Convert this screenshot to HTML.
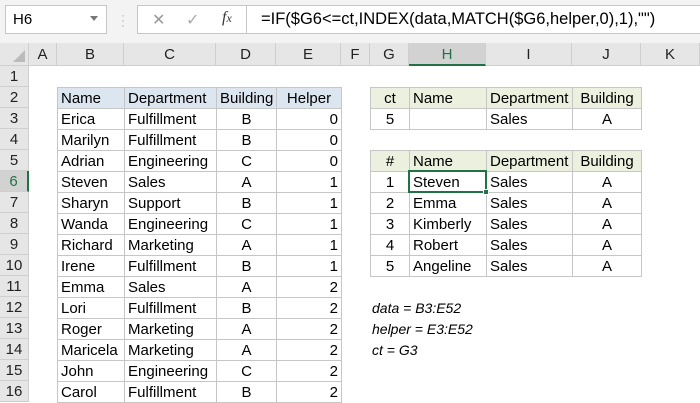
<!DOCTYPE html>
<html><head><meta charset="utf-8"><style>
*{margin:0;padding:0;box-sizing:border-box}
body{width:700px;height:400px;overflow:hidden;background:#fff;font-family:"Liberation Sans",sans-serif;font-size:15px;color:#000;position:relative}
.abs{position:absolute}
.top{left:0;top:0;width:700px;height:43px;background:#f3f3f3}
.nb{left:5px;top:5px;width:102px;height:29px;background:#fff;border:1px solid #c6c6c6;padding:5px 0 0 7px;font-size:15px}
.fb{left:137px;top:5px;width:110px;height:29px;background:#fff;border:1px solid #c6c6c6}
.fx{left:246px;top:5px;width:460px;height:29px;background:#fff;border:1px solid #c6c6c6;padding:4px 0 0 14px;font-size:16.5px;white-space:nowrap}
.ch{top:43px;height:23px;background:#e6e6e6;border-right:1px solid #cfcfcf;border-bottom:1px solid #cfcfcf;text-align:center;font-size:15px;line-height:23px;color:#222}
.rh{left:0;width:29px;height:21px;background:#e6e6e6;border-bottom:1px solid #cfcfcf;border-right:1px solid #cfcfcf;text-align:center;line-height:21px;color:#222;font-size:15px}
table{position:absolute;border-collapse:collapse;table-layout:fixed}
td{border:1px solid #c6c6c6;height:21px;padding:0 3px;white-space:nowrap;overflow:hidden;line-height:19px;font-size:15px}
.c{text-align:center}.r{text-align:right}
.hb td{background:#dce6f1}
.hg td{background:#ebf1de}
.it{font-style:italic;left:372px;font-size:14px}
</style></head><body>
<div class="abs top"></div>
<div class="abs nb">H6<span style="position:absolute;right:8px;top:10px;width:0;height:0;border-left:4px solid transparent;border-right:4px solid transparent;border-top:5px solid #777"></span></div>
<div class="abs" style="left:121px;top:13px;color:#aaa;font-size:12px;line-height:5px">·<br>·<br>·</div>
<div class="abs fb"><span class="abs" style="left:14px;top:4px;color:#999;font-size:16px">✕</span><span class="abs" style="left:48px;top:4px;color:#aaa;font-size:16px">✓</span><span class="abs" style="left:84px;top:3px;color:#333;font-family:'Liberation Serif',serif;font-style:italic;font-size:16px">f<span style="font-size:12px">x</span></span></div>
<div class="abs fx">=IF($G6&lt;=ct,INDEX(data,MATCH($G6,helper,0),1),"")</div>
<div class="abs ch" style="left:0;width:29px"><span class="abs" style="right:3px;bottom:3px;width:0;height:0;border-left:12px solid transparent;border-bottom:12px solid #bbb"></span></div>
<div class="abs ch" style="left:29px;width:28px">A</div>
<div class="abs ch" style="left:57px;width:67px">B</div>
<div class="abs ch" style="left:124px;width:92px">C</div>
<div class="abs ch" style="left:216px;width:60px">D</div>
<div class="abs ch" style="left:276px;width:65px">E</div>
<div class="abs ch" style="left:341px;width:29px">F</div>
<div class="abs ch" style="left:370px;width:39px">G</div>
<div class="abs ch" style="left:409px;width:77px;background:#d2d2d2;border-bottom:2px solid #217346;color:#217346">H</div>
<div class="abs ch" style="left:486px;width:86px">I</div>
<div class="abs ch" style="left:572px;width:69px">J</div>
<div class="abs ch" style="left:641px;width:59px">K</div>
<div class="abs rh" style="top:66px">1</div>
<div class="abs rh" style="top:87px">2</div>
<div class="abs rh" style="top:108px">3</div>
<div class="abs rh" style="top:129px">4</div>
<div class="abs rh" style="top:150px">5</div>
<div class="abs rh" style="top:171px;background:#d2d2d2;border-right:2px solid #217346;color:#217346">6</div>
<div class="abs rh" style="top:192px">7</div>
<div class="abs rh" style="top:213px">8</div>
<div class="abs rh" style="top:234px">9</div>
<div class="abs rh" style="top:255px">10</div>
<div class="abs rh" style="top:276px">11</div>
<div class="abs rh" style="top:297px">12</div>
<div class="abs rh" style="top:318px">13</div>
<div class="abs rh" style="top:339px">14</div>
<div class="abs rh" style="top:360px">15</div>
<div class="abs rh" style="top:381px">16</div>

<table style="left:57px;top:87px;width:285px">
<colgroup><col style="width:67px"><col style="width:92px"><col style="width:60px"><col style="width:65px"></colgroup>
<tr class="hb"><td>Name</td><td>Department</td><td class="c">Building</td><td class="c">Helper</td></tr>
<tr><td>Erica</td><td>Fulfillment</td><td class="c">B</td><td class="r">0</td></tr>
<tr><td>Marilyn</td><td>Fulfillment</td><td class="c">B</td><td class="r">0</td></tr>
<tr><td>Adrian</td><td>Engineering</td><td class="c">C</td><td class="r">0</td></tr>
<tr><td>Steven</td><td>Sales</td><td class="c">A</td><td class="r">1</td></tr>
<tr><td>Sharyn</td><td>Support</td><td class="c">B</td><td class="r">1</td></tr>
<tr><td>Wanda</td><td>Engineering</td><td class="c">C</td><td class="r">1</td></tr>
<tr><td>Richard</td><td>Marketing</td><td class="c">A</td><td class="r">1</td></tr>
<tr><td>Irene</td><td>Fulfillment</td><td class="c">B</td><td class="r">1</td></tr>
<tr><td>Emma</td><td>Sales</td><td class="c">A</td><td class="r">2</td></tr>
<tr><td>Lori</td><td>Fulfillment</td><td class="c">B</td><td class="r">2</td></tr>
<tr><td>Roger</td><td>Marketing</td><td class="c">A</td><td class="r">2</td></tr>
<tr><td>Maricela</td><td>Marketing</td><td class="c">A</td><td class="r">2</td></tr>
<tr><td>John</td><td>Engineering</td><td class="c">C</td><td class="r">2</td></tr>
<tr><td>Carol</td><td>Fulfillment</td><td class="c">B</td><td class="r">2</td></tr>
</table>

<table style="left:370px;top:87px;width:272px">
<colgroup><col style="width:39px"><col style="width:77px"><col style="width:86px"><col style="width:69px"></colgroup>
<tr class="hg"><td class="c">ct</td><td>Name</td><td>Department</td><td class="c">Building</td></tr>
<tr><td class="c">5</td><td></td><td>Sales</td><td class="c">A</td></tr>
</table>

<table style="left:370px;top:150px;width:272px">
<colgroup><col style="width:39px"><col style="width:77px"><col style="width:86px"><col style="width:69px"></colgroup>
<tr class="hg"><td class="c">#</td><td>Name</td><td>Department</td><td class="c">Building</td></tr>
<tr><td class="c">1</td><td>Steven</td><td>Sales</td><td class="c">A</td></tr>
<tr><td class="c">2</td><td>Emma</td><td>Sales</td><td class="c">A</td></tr>
<tr><td class="c">3</td><td>Kimberly</td><td>Sales</td><td class="c">A</td></tr>
<tr><td class="c">4</td><td>Robert</td><td>Sales</td><td class="c">A</td></tr>
<tr><td class="c">5</td><td>Angeline</td><td>Sales</td><td class="c">A</td></tr>
</table>
<div class="abs" style="left:408px;top:170px;width:79px;height:23px;border:2px solid #217346"></div>
<div class="abs" style="left:483px;top:189px;width:6px;height:6px;background:#217346;border:1px solid #fff"></div>

<div class="abs it" style="top:300px">data = B3:E52</div>
<div class="abs it" style="top:321px">helper = E3:E52</div>
<div class="abs it" style="top:342px">ct = G3</div>
</body></html>
